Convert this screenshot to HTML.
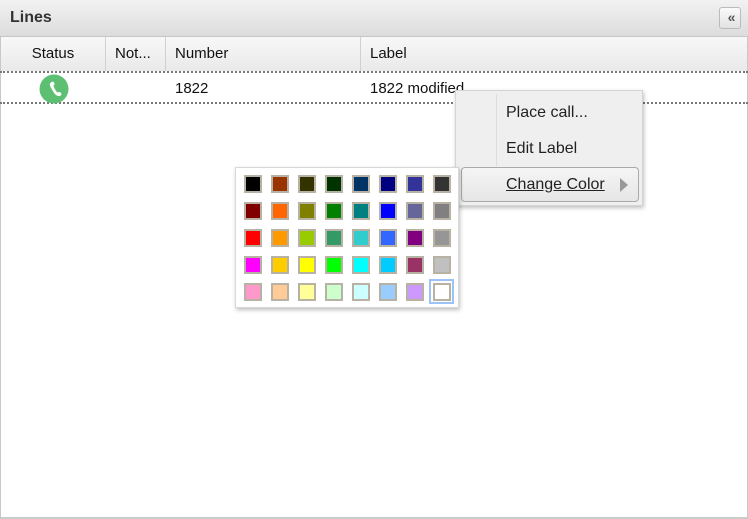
<!DOCTYPE html>
<html><head><style>
*{box-sizing:border-box;margin:0;padding:0}
body{width:748px;height:519px;position:relative;background:#fff;font-family:"Liberation Sans",sans-serif;overflow:hidden;color:#222}
.frame{position:absolute;left:0;top:0;width:748px;height:519px;border:1px solid #c8c8c8;border-bottom:2px solid #ccc}
.title{position:absolute;left:0;top:0;width:748px;height:37px;background:linear-gradient(#f2f2f2,#dcdcdc);border-bottom:1px solid #c6c6c6}
.title span{position:absolute;left:10px;top:9px;font-weight:bold;font-size:16px;color:#333}
.btn{position:absolute;left:719px;top:7px;width:22px;height:22px;border:1px solid #bbb;border-radius:3px;background:linear-gradient(#fafafa,#e2e2e2);color:#555;font-size:14px;font-weight:bold;text-align:center;line-height:19px;letter-spacing:-3px}
.hdr{position:absolute;top:37px;height:34px;background:linear-gradient(#f8f8f8,#e9e9e9);border-right:1px solid #d0d0d0;font-size:15px;line-height:34px;color:#111}
.dot{position:absolute;left:0;width:748px;height:0;border-top:2px dotted #777}
.cell{position:absolute;top:80px;font-size:15px;color:#111}
.pal{position:absolute;left:235px;top:167px;width:224px;height:141px;background:#fff;border:1px solid #d8d8d8;box-shadow:1px 2px 4px rgba(0,0,0,.25);z-index:5}
.sw{position:absolute;width:18px;height:18px;border:2px solid #b8b2a4}
.menu{position:absolute;left:455px;top:90px;width:188px;height:116px;background:#efefef;border:1px solid #d4d4d4;box-shadow:1px 2px 4px rgba(0,0,0,.25)}
.menu .sep{position:absolute;left:40px;top:3px;width:1px;height:72px;background:#ddd}
.mi{position:absolute;left:50px;font-size:16px;color:#222}
.hl{position:absolute;left:5px;top:76px;width:178px;height:35px;border:1px solid #aaa;border-radius:4px;background:linear-gradient(#f5f5f5,#e6e6e6)}
</style></head><body>
<div class="frame"></div>
<div class="title"><span>Lines</span><div class="btn">«</div></div>
<div class="hdr" style="left:1px;width:105px;text-align:center">Status</div>
<div class="hdr" style="left:106px;width:60px;padding-left:9px">Not...</div>
<div class="hdr" style="left:166px;width:195px;padding-left:9px">Number</div>
<div class="hdr" style="left:361px;width:386px;padding-left:9px;border-right:none">Label</div>
<div class="dot" style="top:71px"></div>
<div class="dot" style="top:102px"></div>
<svg style="position:absolute;left:39px;top:74px" width="30" height="30" viewBox="0 0 30 30"><circle cx="15" cy="15" r="14.5" fill="#5cbf72"/><path d="M11 9c2-2 3-1 4 1l-1 2c2 3 3 5 5 6l2-1c2 1 3 2 1 4-2 1-5 0-8-4s-5-6-3-8z" fill="#fff" transform="rotate(8 15 15)"/></svg>
<div class="cell" style="left:175px">1822</div>
<div class="cell" style="left:370px">1822 modified</div>
<div class="pal" id="pal"></div>
<div class="menu">
<div class="sep"></div>
<div class="mi" style="top:13px">Place call...</div>
<div class="mi" style="top:49px">Edit Label</div>
<div class="hl"></div>
<div class="mi" style="top:85px;text-decoration:underline">Change Color</div>
<div style="position:absolute;left:164px;top:87px;width:0;height:0;border-left:8px solid #999;border-top:7px solid transparent;border-bottom:7px solid transparent"></div>
</div>
<script>
var c=["#000000","#993300","#333300","#003300","#003366","#000080","#333399","#333333",
"#800000","#ff6600","#808000","#008000","#008080","#0000ff","#666699","#808080",
"#ff0000","#ff9900","#99cc00","#339966","#33cccc","#3366ff","#800080","#969696",
"#ff00ff","#ffcc00","#ffff00","#00ff00","#00ffff","#00ccff","#993366","#c0c0c0",
"#ff99cc","#ffcc99","#ffff99","#ccffcc","#ccffff","#99ccff","#cc99ff","#ffffff"];
var p=document.getElementById('pal'),h='';
for(var i=0;i<40;i++){var r=Math.floor(i/8),k=i%8;h+='<div class="sw" style="left:'+(8+k*27)+'px;top:'+(7+r*27)+'px;background:'+c[i]+'"></div>';}
h+='<div style="position:absolute;left:193px;top:111px;width:25px;height:25px;border:2px solid #9cc3f5"></div>';
p.innerHTML=h;
</script>
</body></html>
